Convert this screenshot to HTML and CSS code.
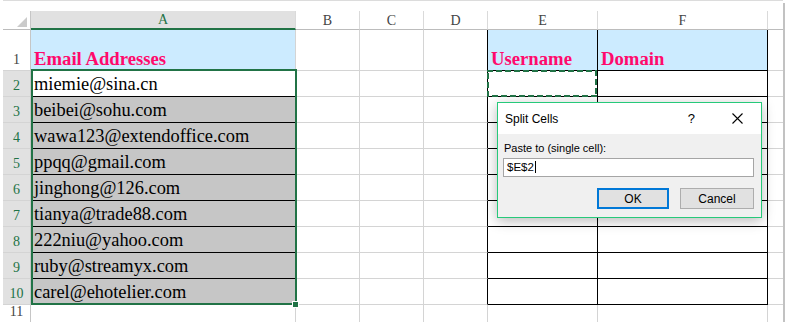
FILE: index.html
```html
<!DOCTYPE html>
<html>
<head>
  <title>Split Cells</title>
  <meta charset="utf-8">
  <link rel="stylesheet" href="styles.css">
</head>
<body>
  <div class="sheet">
    <div class="row hdr">
      <div class="c corner"><div class="tri"></div></div>
      <div class="c col on">A</div>
      <div class="c col">B</div>
      <div class="c col">C</div>
      <div class="c col">D</div>
      <div class="c col">E</div>
      <div class="c col">F</div>
      <div class="c col last"></div>
    </div>
    <div class="row r1">
      <div class="c rh">1</div>
      <div class="c blue ttl">Email Addresses</div>
      <div class="c"></div>
      <div class="c"></div>
      <div class="c br"></div>
      <div class="c blue ttl br bb">Username</div>
      <div class="c blue ttl br bb">Domain</div>
      <div class="c last"></div>
    </div>
    <div class="row r">
      <div class="c rh sel">2</div>
      <div class="c bb">miemie@sina.cn</div>
      <div class="c"></div><div class="c"></div><div class="c br"></div>
      <div class="c br bb"></div><div class="c br bb"></div><div class="c last"></div>
    </div>
    <div class="row r">
      <div class="c rh sel">3</div>
      <div class="c gray bb">beibei@sohu.com</div>
      <div class="c"></div><div class="c"></div><div class="c br"></div>
      <div class="c br bb"></div><div class="c br bb"></div><div class="c last"></div>
    </div>
    <div class="row r">
      <div class="c rh sel">4</div>
      <div class="c gray bb">wawa123@extendoffice.com</div>
      <div class="c"></div><div class="c"></div><div class="c br"></div>
      <div class="c br bb"></div><div class="c br bb"></div><div class="c last"></div>
    </div>
    <div class="row r">
      <div class="c rh sel">5</div>
      <div class="c gray bb">ppqq@gmail.com</div>
      <div class="c"></div><div class="c"></div><div class="c br"></div>
      <div class="c br bb"></div><div class="c br bb"></div><div class="c last"></div>
    </div>
    <div class="row r">
      <div class="c rh sel">6</div>
      <div class="c gray bb">jinghong@126.com</div>
      <div class="c"></div><div class="c"></div><div class="c br"></div>
      <div class="c br bb"></div><div class="c br bb"></div><div class="c last"></div>
    </div>
    <div class="row r">
      <div class="c rh sel">7</div>
      <div class="c gray bb">tianya@trade88.com</div>
      <div class="c"></div><div class="c"></div><div class="c br"></div>
      <div class="c br bb"></div><div class="c br bb"></div><div class="c last"></div>
    </div>
    <div class="row r">
      <div class="c rh sel">8</div>
      <div class="c gray bb">222niu@yahoo.com</div>
      <div class="c"></div><div class="c"></div><div class="c br"></div>
      <div class="c br bb"></div><div class="c br bb"></div><div class="c last"></div>
    </div>
    <div class="row r">
      <div class="c rh sel">9</div>
      <div class="c gray bb">ruby@streamyx.com</div>
      <div class="c"></div><div class="c"></div><div class="c br"></div>
      <div class="c br bb"></div><div class="c br bb"></div><div class="c last"></div>
    </div>
    <div class="row r">
      <div class="c rh sel">10</div>
      <div class="c gray">carel@ehotelier.com</div>
      <div class="c"></div><div class="c"></div><div class="c br"></div>
      <div class="c br bb"></div><div class="c br bb"></div><div class="c last"></div>
    </div>
    <div class="row r11">
      <div class="c rh">11</div>
      <div class="c"></div><div class="c"></div><div class="c"></div><div class="c"></div>
      <div class="c"></div><div class="c"></div><div class="c last"></div>
    </div>

    <!-- selection + copy marquee -->
    <div class="pick"></div>
    <div class="handle"></div>
    <svg class="ants" width="110" height="27" viewBox="0 0 110 27">
      <path d="M0 1H110M109 0V27M110 26H0M1 27V0" fill="none" stroke="#217346" stroke-width="2" stroke-dasharray="6 3" shape-rendering="crispEdges"/>
    </svg>

    <div class="dialog">
      <div class="dlg-title">
        <span class="dlg-name">Split Cells</span>
        <span class="help">?</span>
        <svg class="close" width="11" height="11" viewBox="0 0 11 11">
          <path d="M0.5 0.5L10.5 10.5M10.5 0.5L0.5 10.5" stroke="#000" stroke-width="1.1" fill="none"/>
        </svg>
      </div>
      <div class="dlg-body">
        <div class="lbl">Paste to (single cell):</div>
        <div class="field">$E$2<span class="caret"></span></div>
        <div class="btns">
          <div class="btn ok">OK</div>
          <div class="btn">Cancel</div>
        </div>
      </div>
    </div>
  </div>
</body>
</html>
```

FILE: styles.css
```css
body { margin: 0; background: #fff; }
.sheet { position: relative; width: 780px; margin-left: 3px; border-top: 1px solid #dcdcdc; padding-top: 10px; box-shadow: 2px 3px 0 #c2c2c2; font-family: "Liberation Serif", serif; }
.row { display: grid; grid-template-columns: 28px 265px 64px 64px 64px 110px 170px 15px; }
.hdr { height: 19px; }
.r1 { height: 41px; }
.r { height: 26px; }
.r11 { height: 17px; }
.r11 .c { border-bottom: none; }

.c { box-sizing: border-box; display: flex; align-items: flex-end; padding: 0 3px 2px; border-right: 1px solid #d4d4d4; border-bottom: 1px solid #d4d4d4; font-size: 18.4px; line-height: 20px; white-space: nowrap; overflow: hidden; color: #000; }
.c.last { border-right: none; }
.bb { border-bottom-color: #000; }
.br { border-right-color: #000; }
.gray { background: #c6c6c6; }
.blue { background: #ccebff; }
.ttl { font-weight: bold; color: #ff0a6c; font-size: 18.7px; padding-bottom: 1px; }

.corner { justify-content: flex-end; border-right-color: #c6c6c6; border-bottom-color: #bcbcbc; }
.tri { width: 0; height: 0; border-left: 10px solid transparent; border-bottom: 10px solid #cbcbcb; }
.col { justify-content: center; font-size: 14px; line-height: 16px; padding: 0; color: #444; border-bottom-color: #bcbcbc; border-right-color: #dadada; }
.col.on { background: #e1e1e1; color: #217346; border-bottom: 2px solid #217346; }
.rh { justify-content: center; font-size: 14px; line-height: 16px; padding: 0 0 2px; color: #444; border-right-color: #c6c6c6; }
.rh.sel { background: #e1e1e1; color: #217346; }

.pick { position: absolute; left: 28px; top: 68px; width: 266px; height: 236px; box-sizing: border-box; border: 2px solid #217346; }
.handle { position: absolute; left: 289px; top: 300px; width: 5px; height: 5px; background: #217346; border: 1px solid #fff; }
.ants { position: absolute; left: 484px; top: 69px; }

.dialog { position: absolute; left: 494px; top: 101px; width: 265px; height: 116px; box-sizing: border-box; border: 1px solid #26c97a; background: #f0f0f0; box-shadow: 0 3px 12px rgba(0,0,0,0.28); font-family: "Liberation Sans", Arial, sans-serif; color: #000; }
.dlg-title { height: 31px; background: #fff; display: flex; align-items: center; padding-left: 7px; font-size: 12px; }
.dlg-name { flex: 1; }
.help { font-size: 13px; margin-right: 37px; }
.close { margin-right: 18px; }
.dlg-body { padding: 7px 7px 0 5px; font-size: 11px; }
.lbl { line-height: 14px; padding-left: 1px; }
.field { margin-top: 3px; height: 19px; box-sizing: border-box; border: 1px solid #a5a5a5; background: #fff; padding-left: 3px; line-height: 17px; font-size: 11.5px; }
.caret { display: inline-block; width: 1px; height: 12px; background: #000; vertical-align: -2px; margin-left: 1px; }
.btns { display: flex; justify-content: flex-end; gap: 11px; margin-top: 11px; }
.btn { box-sizing: border-box; width: 74px; height: 21px; border: 1px solid #adadad; background: #e1e1e1; display: flex; align-items: center; justify-content: center; font-size: 12px; }
.btn.ok { width: 72px; border: 2px solid #0078d7; }
```
